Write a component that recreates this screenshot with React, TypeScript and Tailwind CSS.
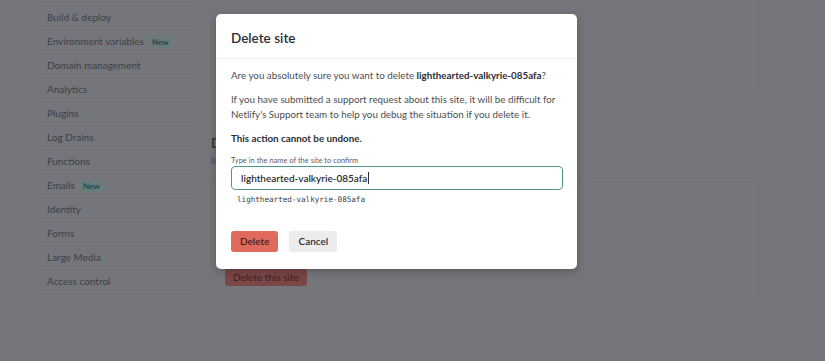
import React from "react";

const navItems: { label: string; isNew?: boolean }[] = [
  { label: "Build & deploy" },
  { label: "Environment variables", isNew: true },
  { label: "Domain management" },
  { label: "Analytics" },
  { label: "Plugins" },
  { label: "Log Drains" },
  { label: "Functions" },
  { label: "Emails", isNew: true },
  { label: "Identity" },
  { label: "Forms" },
  { label: "Large Media" },
  { label: "Access control" },
];

const siteName = "lighthearted-valkyrie-085afa";

function Sidebar() {
  return (
    <nav className="ml-[38px] mt-[5px] w-[157px] shrink-0">
      <ul className="border-b border-[#6f7176]">
        {navItems.map((item) => (
          <li
            key={item.label}
            className="flex h-[24px] items-center gap-[5px] border-t border-[#6f7176] pl-[9px] text-[10px] text-[#3d4045]"
          >
            <span>{item.label}</span>
            {item.isNew && (
              <span className="rounded-[2px] bg-[#6b7a7b] px-[3px] text-[8px] font-bold text-[#1d4a4a]">
                New
              </span>
            )}
          </li>
        ))}
      </ul>
    </nav>
  );
}

function Content() {
  return (
    <main className="ml-[15px] w-[549px] shrink-0">
      {/* general settings card, scrolled mostly out of view */}
      <section className="mt-[-40px] h-[130px] rounded-[3px] border border-[#6f7176]" />

      <div className="mt-[44px] pl-[1px]">
        <h2 className="text-[14px] font-semibold leading-[18px] text-[#2e3136]">Danger zone</h2>
        <p className="mt-[2px] text-[9px] text-[#4a4d52]">Irreversible and destructive actions.</p>
      </div>

      <section className="mt-[10px] h-[120px] rounded-[3px] border border-[#6f7176] px-[14px] pt-[84px]">
        <button className="rounded-[3px] bg-[#7a4646] px-[8px] py-[3px] text-[10px] leading-[12px] text-[#381f20]">
          Delete this site
        </button>
      </section>
    </main>
  );
}

function DeleteDialog() {
  return (
    <div className="absolute left-[216px] top-[14px] w-[361px] rounded-[5px] bg-white shadow-[0_2px_8px_rgba(0,0,0,0.25)]">
      <header className="border-b border-[#f3f3f4] px-[15px] pb-[10px] pt-[14px]">
        <h1 className="text-[13.5px] font-semibold leading-[20px] text-[#2b2e33]">Delete site</h1>
      </header>

      <div className="pb-[17px] pl-[15px] pr-[14px] pt-[9px] text-[9.8px] leading-[15px] text-[#4b4e53]">
        <p>
          Are you absolutely sure you want to delete{" "}
          <strong className="font-bold text-[#2b2e33]">{siteName}</strong>?
        </p>
        <p className="mt-[9px]">
          If you have submitted a support request about this site, it will be difficult for
          Netlify's Support team to help you debug the situation if you delete it.
        </p>
        <p className="mt-[9px] font-bold text-[#2b2e33]">This action cannot be undone.</p>

        <label className="mt-[11px] block text-[7.5px] leading-[8px] text-[#5b5e63]">
          Type in the name of the site to confirm
        </label>
        <div className="mt-[1px] flex h-[24px] items-center rounded-[4px] border border-[#4f9888] px-[9px] text-[10px] font-semibold text-[#2b2e33]">
          {siteName}
          <span className="ml-[1px] h-[12px] w-[1px] bg-[#2b2e33]" />
        </div>
        <div className="mt-[4px] pl-[6px] font-['DejaVu_Sans_Mono',monospace] text-[7.6px] leading-[12px] text-[#3b3e43]">
          {siteName}
        </div>

        <div className="mt-[25px] flex gap-[11px]">
          <button className="h-[21px] rounded-[3px] bg-[#e06a5c] px-[9px] text-[10px] font-semibold text-[#4a1d18]">
            Delete
          </button>
          <button className="h-[21px] rounded-[3px] bg-[#ececed] px-[9px] text-[10px] font-semibold text-[#2b2e33]">
            Cancel
          </button>
        </div>
      </div>
    </div>
  );
}

export default function App() {
  return (
    <div className="relative h-[361px] w-[825px] overflow-hidden bg-[#74767b] font-['Lato','Noto_Sans',sans-serif]">
      <div className="flex">
        <Sidebar />
        <Content />
      </div>
      <DeleteDialog />
    </div>
  );
}
